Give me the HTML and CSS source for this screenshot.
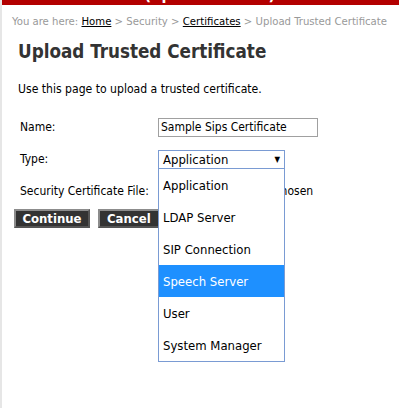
FILE: index.html
```html
<!DOCTYPE html>
<html>
<head>
<meta charset="utf-8">
<link rel="stylesheet" href="styles.css">
</head>
<body>
<div class="page">
  <div class="topbar"><span class="topbar-text">Media Server (Speech Server)</span></div>
  <div class="content">
    <div class="crumbs">You are here: <a href="#">Home</a> &gt; Security &gt; <a href="#">Certificates</a> &gt; Upload Trusted Certificate</div>
    <h1 class="title">Upload Trusted Certificate</h1>
    <p class="intro">Use this page to upload a trusted certificate.</p>
    <div class="form">
      <div class="row">
        <span class="label">Name:</span>
        <span class="field"><span class="textbox">Sample Sips Certificate</span></span>
      </div>
      <div class="row">
        <span class="label">Type:</span>
        <span class="field select-wrap">
          <span class="select"><span>Application</span><span class="arrow">&#9660;</span></span>
          <ul class="dropdown">
            <li>Application</li>
            <li>LDAP Server</li>
            <li>SIP Connection</li>
            <li class="active">Speech Server</li>
            <li>User</li>
            <li>System Manager</li>
          </ul>
        </span>
      </div>
      <div class="row">
        <span class="label">Security Certificate File:</span>
        <span class="field file">Choose File No file chosen</span>
      </div>
      <div class="buttons">
        <span class="btn continue">Continue</span>
        <span class="btn cancel">Cancel</span>
      </div>
    </div>
  </div>
</div>
</body>
</html>
```
FILE: styles.css
```css
html, body {
  margin: 0;
  padding: 0;
  background: #fff;
}
body {
  font-family: "DejaVu Sans Condensed", "DejaVu Sans", sans-serif;
  color: #000;
}
.page {
  border-left: 2px solid #e6e6e6;
  min-height: 408px;
  box-sizing: border-box;
}
.topbar {
  height: 5px;
  background: #b30000;
  overflow: hidden;
  padding-left: 30px;
}
.topbar-text {
  display: block;
  color: #fff;
  font-weight: bold;
  font-size: 16px;
  line-height: 16px;
  margin-top: -13px;
  white-space: nowrap;
}
.content {
  padding-left: 10px;
}
.crumbs {
  font-size: 11.25px;
  color: #999;
  margin-top: 10px;
  line-height: 14px;
  white-space: nowrap;
}
.crumbs a {
  color: #000;
  text-decoration: underline;
}
.title {
  font-size: 18.7px;
  font-weight: bold;
  color: #333;
  margin: 12px 0 0 6px;
  line-height: 22px;
}
.intro {
  font-size: 12.1px;
  margin: 19px 0 0 6px;
  line-height: 14px;
}
.form {
  margin: 15px 0 0 8px;
}
.row {
  display: flex;
  align-items: center;
  height: 32px;
  font-size: 12px;
}
.label {
  width: 138px;
  flex: none;
}
.field {
  position: relative;
}
.textbox {
  display: block;
  box-sizing: border-box;
  width: 160px;
  height: 19px;
  border: 1px solid #a0a0a0;
  padding: 0 2px;
  line-height: 17px;
  font-size: 12px;
}
.select {
  display: flex;
  justify-content: space-between;
  align-items: center;
  box-sizing: border-box;
  width: 127px;
  height: 19px;
  border: 1px solid #7a9bd3;
  padding: 0 4px 0 4px;
  font-size: 13px;
  line-height: 17px;
}
.arrow {
  font-size: 8px;
}
.dropdown {
  position: absolute;
  left: 0;
  top: 19px;
  width: 127px;
  box-sizing: border-box;
  margin: 0;
  padding: 0;
  list-style: none;
  background: #fff;
  border: 1px solid #7a9bd3;
  border-top: none;
  z-index: 2;
}
.dropdown li {
  height: 32px;
  line-height: 34px;
  padding-left: 4px;
  font-size: 13px;
}
.dropdown li.active {
  background: #1e90ff;
  color: #fff;
}
.file {
  font-size: 12px;
  white-space: nowrap;
  padding-left: 14px;
}
.buttons {
  display: flex;
  gap: 8px;
  margin-top: 2px;
  margin-left: -6px;
}
.btn {
  display: block;
  box-sizing: border-box;
  height: 19px;
  text-align: center;
  background: #333;
  color: #fff;
  font-weight: bold;
  font-size: 13px;
  line-height: 15px;
  border: 2px solid #8c8c8c;
  border-right-color: #555;
  border-bottom-color: #555;
}
.continue {
  width: 76px;
}
.cancel {
  width: 66px;
  text-align: left;
  padding-left: 7px;
}
```
